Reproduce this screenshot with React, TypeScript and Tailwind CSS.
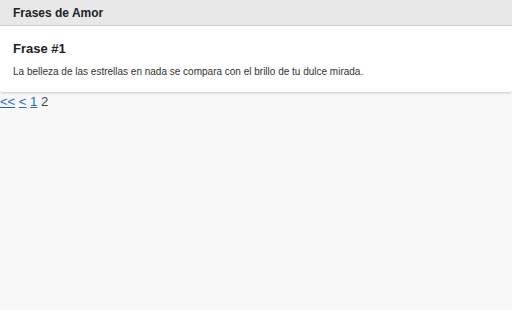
import React from 'react';

const App: React.FC = () => {
  return (
    <div className="min-h-[310px] w-full bg-[#f8f8f8] font-['Liberation_Sans',Arial,sans-serif] text-[#333]">
      <div className="h-[26px] bg-[#e8e8e8] border-b border-[#d6d6d6] flex items-center px-[13px]">
        <h1 className="text-[12px] font-bold text-[#222]">Frases de Amor</h1>
      </div>
      <div className="bg-white rounded-b-[3px] shadow-[0_1px_3px_rgba(0,0,0,0.2)] px-[13px] pt-[14px] pb-[14px]">
        <h2 className="text-[13px] font-bold text-[#222] leading-[18px]">Frase #1</h2>
        <p className="mt-[7px] text-[10px] leading-[13px] text-[#333]">
          La belleza de las estrellas en nada se compara con el brillo de tu dulce mirada.
        </p>
      </div>
      <div className="text-[13px] leading-[17px] pt-[1px] text-[#444]">
        <a href="#" className="text-[#1a6fc9] underline">&lt;&lt;</a>{' '}
        <a href="#" className="text-[#1a6fc9] underline">&lt;</a>{' '}
        <a href="#" className="text-[#1a6fc9] underline">1</a>{' '}
        <span>2</span>
      </div>
    </div>
  );
};

export default App;
